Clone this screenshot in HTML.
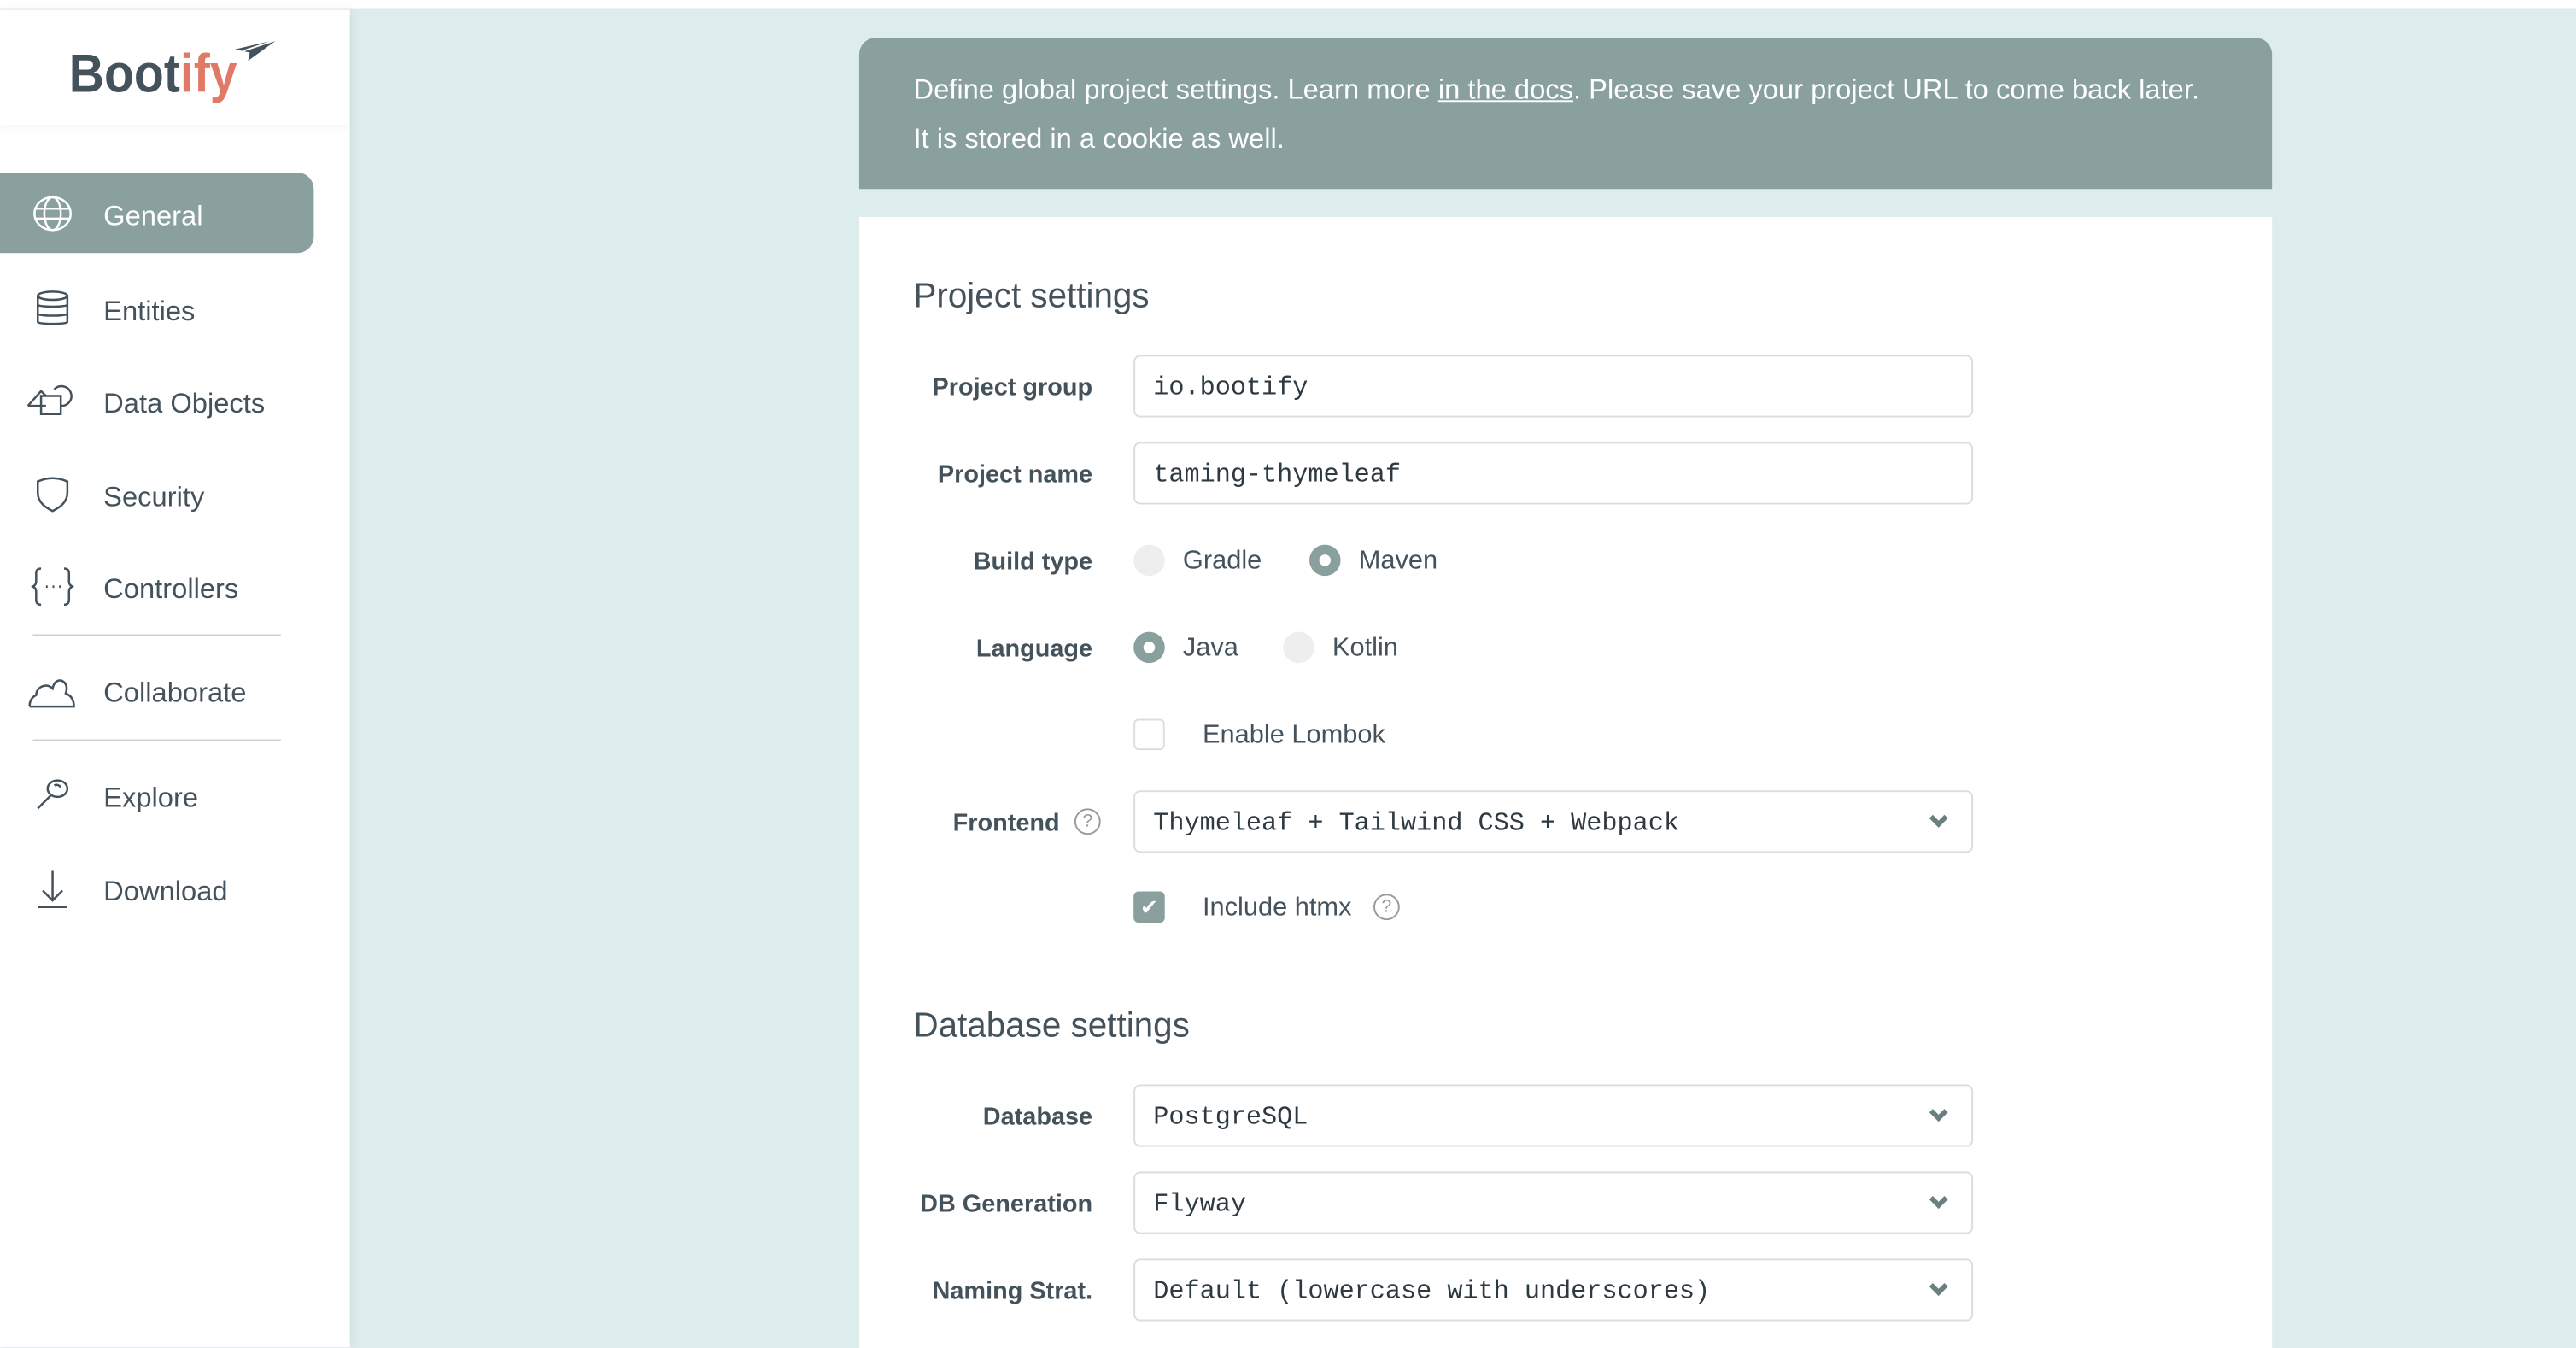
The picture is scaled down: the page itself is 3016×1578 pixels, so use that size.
<!DOCTYPE html>
<html><head><meta charset="utf-8"><style>
*{box-sizing:border-box;margin:0;padding:0}
html,body{width:3016px;height:1578px;overflow:hidden;background:#ddecec}
#w{width:1568px;height:820px;transform:scale(1.92347);transform-origin:0 0;position:relative;font-family:"Liberation Sans",sans-serif;color:#44525c}
.top{position:absolute;left:0;top:0;width:1568px;height:6px;background:#fff;border-bottom:1px solid #dfe5e5}
.side{position:absolute;left:0;top:6px;width:213px;height:814px;background:#fff;box-shadow:2px 0 6px rgba(0,0,0,.06)}
.logo{position:absolute;left:0;top:0;width:213px;height:70px;box-shadow:0 3px 4px rgba(0,0,0,.03)}
.logo span.l{position:absolute;left:42px;top:20px;font-size:33px;font-weight:bold;transform:scaleX(0.9);transform-origin:0 0}
.nav{position:absolute;left:0;width:191px;height:49px;font-size:17px;color:#44525c}
.nav svg{position:absolute;left:19px;top:13px;width:26px;height:24px;fill:none;stroke:#44525c;stroke-width:1.3}
.nav b{position:absolute;left:63px;top:17px;font-weight:normal}
.nav.act{background:#89a09f;border-radius:0 10px 10px 0;color:#fff}
.nav.act svg{stroke:#fff}
.hr{position:absolute;left:20px;width:151px;height:1px;background:#ccd2d2}
.ban{position:absolute;left:523px;top:23px;width:860px;height:92px;background:#89a09f;border-radius:10px 10px 0 0;color:#fff;font-size:17px;line-height:30px;padding:17px 33px 0}
.card{position:absolute;left:523px;top:132px;width:860px;height:700px;background:#fff}
h2{position:absolute;left:556px;font-size:21px;font-weight:normal}
.lb{position:absolute;right:903px;font-size:15px;font-weight:bold;transform:translateY(-50%)}
.in{position:absolute;left:690px;width:511px;height:38px;border:1.5px solid #dcdcdc;border-radius:4px;font-family:"Liberation Mono",monospace;font-size:15.7px;padding:10px 11px;color:#2e3a42}
.chev{position:absolute;right:16px;top:12px;width:8px;height:8px;border-right:3px solid #6a8080;border-bottom:3px solid #6a8080;transform:rotate(45deg)}
.t{position:absolute;font-size:16px;transform:translateY(-50%);margin-top:1px}
.rd{position:absolute;width:19px;height:19px;border-radius:50%;background:#eee;transform:translateY(-50%)}
.rd.on{background:#89a09f}
.rd.on::after{content:"";position:absolute;left:6px;top:6px;width:7px;height:7px;border-radius:50%;background:#fff}
.cb{position:absolute;width:19px;height:19px;border-radius:3px;border:1.5px solid #ddd;transform:translateY(-50%);background:#fff}
.cb.on{background:#89a09f;border-color:#89a09f;color:#fff;font-size:13px;text-align:center;line-height:17px}
.q{position:absolute;width:16px;height:16px;border:1.2px solid #999;border-radius:50%;font-size:11px;color:#999;text-align:center;line-height:14px;transform:translateY(-50%)}
</style></head><body><div id="w">
<div class="top"></div>
<div class="side">
<div class="logo"><span class="l">Boot<span style="color:#e07a66">ify</span></span>
<svg style="position:absolute;left:143px;top:18px" width="27" height="16" viewBox="0 0 27 16"><path d="M0 6 L26 0 L8 13 L9 8 Z" fill="#44525c"/><path d="M5 7 L26 0" stroke="#fff" stroke-width="1"/></svg></div>
<div class="nav act" style="top:99px"><svg viewBox="0 0 26 24"><ellipse cx="13" cy="12" rx="11" ry="10"/><ellipse cx="13" cy="12" rx="5" ry="10"/><path d="M2 9h22M2 15h22"/></svg><b>General</b></div>
<div class="nav" style="top:157px"><svg viewBox="0 0 26 24"><ellipse cx="13" cy="4" rx="9" ry="2.5"/><path d="M4 4v16c0 1.5 18 1.5 18 0V4M4 9.5c0 1.5 18 1.5 18 0M4 15c0 1.5 18 1.5 18 0"/></svg><b>Entities</b></div>
<div class="nav" style="top:213px"><svg viewBox="0 0 31 22" style="left:16px;top:12px;width:31px;height:22px"><path d="M1 16L9 7l3 3M1 16h11M9 10h12v11H9zM17 6a6 6 0 1 1 4 10"/></svg><b>Data Objects</b></div>
<div class="nav" style="top:270px"><svg viewBox="0 0 26 24"><path d="M4 4q9-4 18 0v7c0 6-5 9-9 11-4-2-9-5-9-11z"/></svg><b>Security</b></div>
<div class="nav" style="top:326px"><svg viewBox="0 0 26 24"><path d="M6 1q-3 0-3 3v5q0 2-2 3 2 1 2 3v5q0 3 3 3M20 1q3 0 3 3v5q0 2 2 3-2 1-2 3v5q0 3-3 3"/><path d="M9 12h1M13 12h1M17 12h1" stroke-width="1.5"/></svg><b>Controllers</b></div>
<div class="hr" style="top:380px"></div>
<div class="nav" style="top:389px"><svg viewBox="0 0 30 24" style="left:17px;width:30px"><path d="M1 22h27q0-6-5-8 2-6-3-8-4 0-5 5-3-3-7-1-3 2-3 5-4 2-4 7"/></svg><b>Collaborate</b></div>
<div class="hr" style="top:444px"></div>
<div class="nav" style="top:453px"><svg viewBox="0 0 26 24"><ellipse cx="16" cy="8" rx="6" ry="5"/><path d="M12 12L4 20M14 6q2-1 4 1"/></svg><b>Explore</b></div>
<div class="nav" style="top:510px"><svg viewBox="0 0 26 24"><path d="M13 1v18M7 13l6 6 6-6M4 23h18"/></svg><b>Download</b></div>
</div>
<div class="ban">Define global project settings. Learn more <u>in the docs</u>. Please save your project URL to come back later.<br>It is stored in a cookie as well.</div>
<div class="card"></div>
<h2 style="top:169px">Project settings</h2>
<div class="lb" style="top:236px">Project group</div><div class="in" style="top:216px">io.bootify</div>
<div class="lb" style="top:289px">Project name</div><div class="in" style="top:269px">taming-thymeleaf</div>
<div class="lb" style="top:342px">Build type</div>
<div class="rd" style="left:690px;top:341px"></div><div class="t" style="left:720px;top:341px">Gradle</div>
<div class="rd on" style="left:797px;top:341px"></div><div class="t" style="left:827px;top:341px">Maven</div>
<div class="lb" style="top:395px">Language</div>
<div class="rd on" style="left:690px;top:394px"></div><div class="t" style="left:720px;top:394px">Java</div>
<div class="rd" style="left:781px;top:394px"></div><div class="t" style="left:811px;top:394px">Kotlin</div>
<div class="cb" style="left:690px;top:447px"></div><div class="t" style="left:732px;top:447px">Enable Lombok</div>
<div class="lb" style="top:501px;right:923px">Frontend</div><div class="q" style="left:654px;top:500px">?</div>
<div class="in" style="top:481px">Thymeleaf + Tailwind CSS + Webpack<div class="chev"></div></div>
<div class="cb on" style="left:690px;top:552px">✔</div><div class="t" style="left:732px;top:552px">Include htmx</div><div class="q" style="left:836px;top:552px">?</div>
<h2 style="top:613px">Database settings</h2>
<div class="lb" style="top:680px">Database</div><div class="in" style="top:660px">PostgreSQL<div class="chev"></div></div>
<div class="lb" style="top:733px">DB Generation</div><div class="in" style="top:713px">Flyway<div class="chev"></div></div>
<div class="lb" style="top:786px">Naming Strat.</div><div class="in" style="top:766px">Default (lowercase with underscores)<div class="chev"></div></div>
</div></body></html>
